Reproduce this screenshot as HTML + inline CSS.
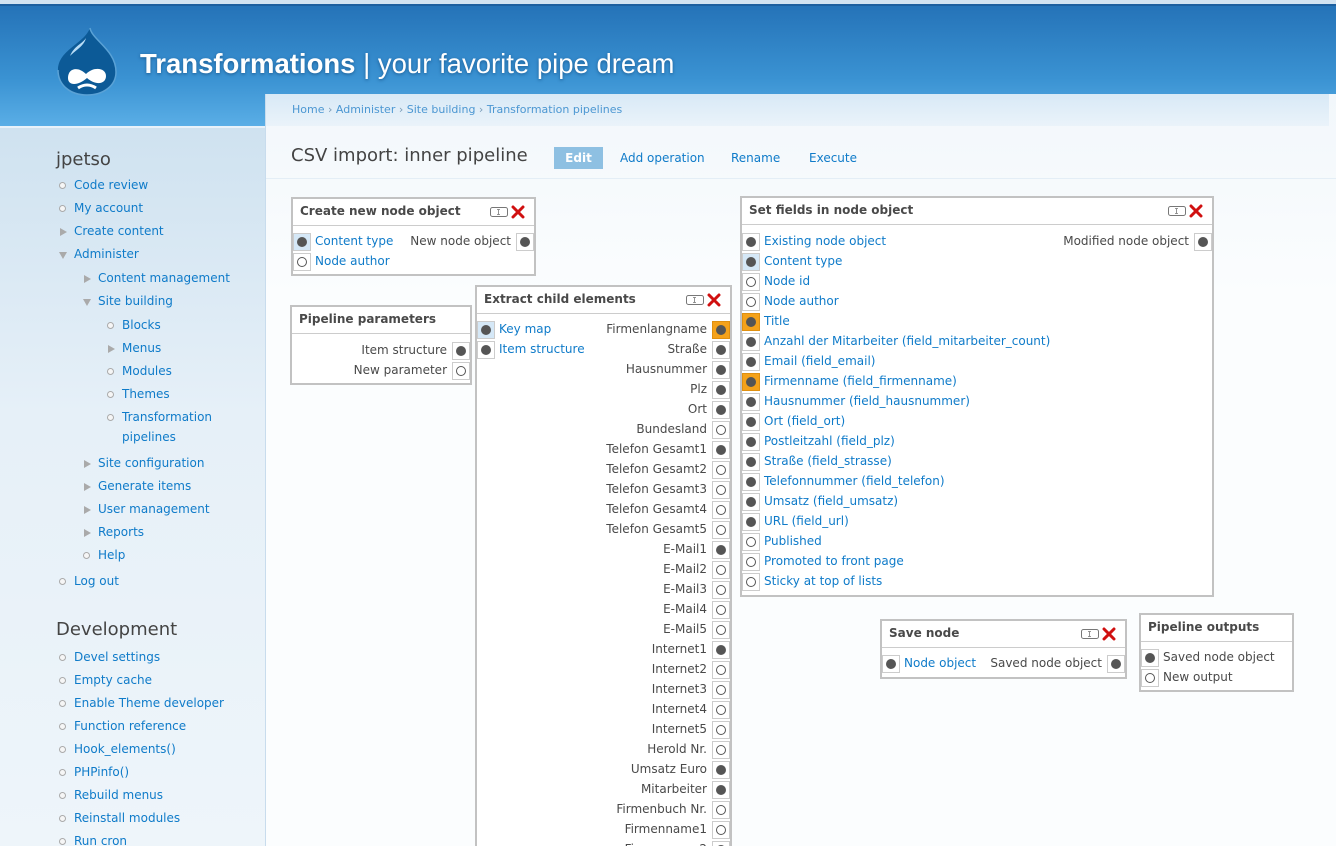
<!DOCTYPE html>
<html style="width:1336px;height:846px;overflow:hidden"><head><meta charset="utf-8">
<style>
*{box-sizing:border-box;margin:0;padding:0}
body{width:1336px;height:846px;overflow:hidden;font-family:"DejaVu Sans","Liberation Sans",sans-serif;font-size:12px;color:#494949;position:relative;background:#edf5fa}
a{color:#0f7bc9;text-decoration:none}
#top{position:absolute;left:0;top:0;width:1336px;height:6px;background:#d2e3f1;border-bottom:2px solid #1d5f9f}
#hdr{position:absolute;left:0;top:6px;width:1336px;height:120px;background:linear-gradient(#2573b8,#3a92d2 60%,#5aaee6)}
#title{position:absolute;left:140px;top:42px;color:#fff;font-family:"Liberation Sans",sans-serif;font-size:27.5px;text-shadow:0 1px 3px #1a5a90;white-space:nowrap}
#title b{font-weight:bold}
#side{position:absolute;left:0;top:126px;width:265px;height:720px;background:linear-gradient(#cfe2f0,#e6f0f8 40%,#eef5fa);border-top:2px solid #e8f2fa}
#main{position:absolute;left:265px;top:94px;width:1071px;height:752px;background:linear-gradient(#f2f7fb,#fbfdfe 200px);border-left:1px solid #c8dced}
#bc{position:absolute;left:0;top:0;width:1063px;height:32px;background:linear-gradient(#d8e9f6,#eaf3fa);font-size:11px;line-height:31px;padding-left:26px;color:#7a9cb8}
#bc a{color:#4c97d2}
.s{position:absolute;white-space:nowrap;line-height:16px}
.sb{position:absolute;width:7px;height:7px;border:1px solid #aaa;border-radius:50%;background:#f6f6f6}
.tri{position:absolute;width:0;height:0}
.tr{border-top:4px solid transparent;border-bottom:4px solid transparent;border-left:7px solid #aaa}
.td{border-left:4px solid transparent;border-right:4px solid transparent;border-top:7px solid #aaa}
.box{position:absolute;border:2px solid #c2c2c2;background:#fff}
.hd{position:absolute;left:0;right:0;top:0;height:27px;border-bottom:1px solid #ccc;font-weight:bold;line-height:25px;padding-left:7px;color:#494949}
.ic{position:absolute;top:6px;right:4px;width:40px;height:14px}
.row{position:absolute;left:0;right:0;height:20px;line-height:18px;white-space:nowrap}
.p{position:absolute;top:1px;width:18px;height:18px;border:1px solid #ccc;background:#fff}
.p.l{left:0}.p.r{right:0}
.p i{position:absolute;left:3px;top:3px;width:10px;height:10px;border-radius:50%;background:#555}
.p.e i{background:#fff;border:1px solid #555}
.p.b{background:#d5e8f7}.p.o{background:#f5a21a;border-color:#e09010}
.lt{position:absolute;left:22px}
.rt{position:absolute;right:23px}
</style></head><body>
<div id="top"></div>
<div id="hdr">
<svg style="position:absolute;left:56px;top:20px" width="62" height="70" viewBox="0 0 62 70">
<path d="M34 2 C36 14 60 24 60 46 C60 60 47 69 31 69 C14 69 2 59 2 44 C2 24 28 18 34 2 Z" fill="#0c5a97"/>
<path d="M34 2 C36 14 60 24 60 46 C60 60 47 69 31 69 C14 69 2 59 2 44" fill="none" stroke="#5aa2d6" stroke-width="1.5"/>
<path d="M14 30 C18 20 26 18 30 12 C28 20 20 24 14 30Z" fill="#b8dcf5"/>
<path d="M12 52 C12 42 22 40 30 48 C38 40 50 42 50 50 C50 58 40 60 31 52 C22 60 12 60 12 52Z" fill="#fff"/>
<path d="M22 62 C28 58 34 58 40 62" stroke="#fff" stroke-width="3" fill="none"/>
</svg>
<div id="title"><b>Transformations</b> | your favorite pipe dream</div>
</div>
<div id="side">
<div class="s" style="left:56px;top:21px;font-size:18px;line-height:22px;color:#444">jpetso</div>
<div class="sb" style="left:59px;top:54px"></div><a class="s" style="left:74px;top:49px">Code review</a>
<div class="sb" style="left:59px;top:77px"></div><a class="s" style="left:74px;top:72px">My account</a>
<div class="tri tr" style="left:60px;top:100px"></div><a class="s" style="left:74px;top:95px">Create content</a>
<div class="tri td" style="left:59px;top:124px"></div><a class="s" style="left:74px;top:118px">Administer</a>
<div class="tri tr" style="left:84px;top:147px"></div><a class="s" style="left:98px;top:142px">Content management</a>
<div class="tri td" style="left:83px;top:171px"></div><a class="s" style="left:98px;top:165px">Site building</a>
<div class="sb" style="left:107px;top:194px"></div><a class="s" style="left:122px;top:189px">Blocks</a>
<div class="tri tr" style="left:108px;top:217px"></div><a class="s" style="left:122px;top:212px">Menus</a>
<div class="sb" style="left:107px;top:240px"></div><a class="s" style="left:122px;top:235px">Modules</a>
<div class="sb" style="left:107px;top:263px"></div><a class="s" style="left:122px;top:258px">Themes</a>
<div class="sb" style="left:107px;top:286px"></div><a class="s" style="left:122px;top:281px">Transformation</a><a class="s" style="left:122px;top:301px">pipelines</a>
<div class="tri tr" style="left:84px;top:332px"></div><a class="s" style="left:98px;top:327px">Site configuration</a>
<div class="tri tr" style="left:84px;top:355px"></div><a class="s" style="left:98px;top:350px">Generate items</a>
<div class="tri tr" style="left:84px;top:378px"></div><a class="s" style="left:98px;top:373px">User management</a>
<div class="tri tr" style="left:84px;top:401px"></div><a class="s" style="left:98px;top:396px">Reports</a>
<div class="sb" style="left:83px;top:424px"></div><a class="s" style="left:98px;top:419px">Help</a>
<div class="sb" style="left:59px;top:450px"></div><a class="s" style="left:74px;top:445px">Log out</a>
<div class="s" style="left:56px;top:491px;font-size:18px;line-height:22px;color:#444">Development</div>
<div class="sb" style="left:59px;top:526px"></div><a class="s" style="left:74px;top:521px">Devel settings</a>
<div class="sb" style="left:59px;top:549px"></div><a class="s" style="left:74px;top:544px">Empty cache</a>
<div class="sb" style="left:59px;top:572px"></div><a class="s" style="left:74px;top:567px">Enable Theme developer</a>
<div class="sb" style="left:59px;top:595px"></div><a class="s" style="left:74px;top:590px">Function reference</a>
<div class="sb" style="left:59px;top:618px"></div><a class="s" style="left:74px;top:613px">Hook_elements()</a>
<div class="sb" style="left:59px;top:641px"></div><a class="s" style="left:74px;top:636px">PHPinfo()</a>
<div class="sb" style="left:59px;top:664px"></div><a class="s" style="left:74px;top:659px">Rebuild menus</a>
<div class="sb" style="left:59px;top:687px"></div><a class="s" style="left:74px;top:682px">Reinstall modules</a>
<div class="sb" style="left:59px;top:710px"></div><a class="s" style="left:74px;top:705px">Run cron</a>
</div>
<div id="main">
<div id="bc"><a>Home</a> › <a>Administer</a> › <a>Site building</a> › <a>Transformation pipelines</a></div>
<div class="s" style="left:25px;top:51px;font-size:18px;line-height:22px;color:#444">CSV import: inner pipeline</div>
<div class="s" style="left:288px;top:53px;width:49px;height:22px;background:#8ec0e2;color:#fff;font-weight:bold;text-align:center;line-height:22px">Edit</div>
<a class="s" style="left:354px;top:56px">Add operation</a>
<a class="s" style="left:465px;top:56px">Rename</a>
<a class="s" style="left:543px;top:56px">Execute</a>
<div style="position:absolute;left:0;top:84px;width:1071px;height:1px;background:#e4eef6"></div>
</div>

<svg width="0" height="0" style="position:absolute"><defs>
<g id="icn"><rect x="0.5" y="2.5" width="17" height="9" rx="2" fill="#fff" stroke="#777"/><path d="M7 4.5h3M8.5 4.5v5M7 9.5h3" stroke="#777" stroke-width="0.8"/>
<path d="M23 2 L33 12 M33 2 L23 12" stroke="#d01010" stroke-width="3" stroke-linecap="round"/></g>
</defs></svg>

<!-- Create new node object -->
<div class="box" style="left:291px;top:197px;width:245px;height:79px">
<div class="hd">Create new node object</div>
<svg class="ic" viewBox="0 0 40 14"><use href="#icn"/></svg>
<div class="row" style="top:33px"><div class="p l b"><i></i></div><a class="lt">Content type</a><span class="rt">New node object</span><div class="p r"><i></i></div></div>
<div class="row" style="top:53px"><div class="p l e"><i></i></div><a class="lt">Node author</a></div>
</div>

<!-- Pipeline parameters -->
<div class="box" style="left:290px;top:305px;width:182px;height:80px">
<div class="hd">Pipeline parameters</div>
<div class="row" style="top:34px"><span class="rt">Item structure</span><div class="p r"><i></i></div></div>
<div class="row" style="top:54px"><span class="rt">New parameter</span><div class="p r e"><i></i></div></div>
</div>

<!-- Extract child elements -->
<div class="box" style="left:475px;top:285px;width:257px;height:600px">
<div class="hd">Extract child elements</div>
<svg class="ic" viewBox="0 0 40 14"><use href="#icn"/></svg>
<div class="row" style="top:33px"><div class="p l b"><i></i></div><a class="lt">Key map</a><span class="rt">Firmenlangname</span><div class="p r o"><i></i></div></div>
<div class="row" style="top:53px"><div class="p l"><i></i></div><a class="lt">Item structure</a><span class="rt">Straße</span><div class="p r"><i></i></div></div>
<div class="row" style="top:73px"><span class="rt">Hausnummer</span><div class="p r"><i></i></div></div>
<div class="row" style="top:93px"><span class="rt">Plz</span><div class="p r"><i></i></div></div>
<div class="row" style="top:113px"><span class="rt">Ort</span><div class="p r"><i></i></div></div>
<div class="row" style="top:133px"><span class="rt">Bundesland</span><div class="p r e"><i></i></div></div>
<div class="row" style="top:153px"><span class="rt">Telefon Gesamt1</span><div class="p r"><i></i></div></div>
<div class="row" style="top:173px"><span class="rt">Telefon Gesamt2</span><div class="p r e"><i></i></div></div>
<div class="row" style="top:193px"><span class="rt">Telefon Gesamt3</span><div class="p r e"><i></i></div></div>
<div class="row" style="top:213px"><span class="rt">Telefon Gesamt4</span><div class="p r e"><i></i></div></div>
<div class="row" style="top:233px"><span class="rt">Telefon Gesamt5</span><div class="p r e"><i></i></div></div>
<div class="row" style="top:253px"><span class="rt">E-Mail1</span><div class="p r"><i></i></div></div>
<div class="row" style="top:273px"><span class="rt">E-Mail2</span><div class="p r e"><i></i></div></div>
<div class="row" style="top:293px"><span class="rt">E-Mail3</span><div class="p r e"><i></i></div></div>
<div class="row" style="top:313px"><span class="rt">E-Mail4</span><div class="p r e"><i></i></div></div>
<div class="row" style="top:333px"><span class="rt">E-Mail5</span><div class="p r e"><i></i></div></div>
<div class="row" style="top:353px"><span class="rt">Internet1</span><div class="p r"><i></i></div></div>
<div class="row" style="top:373px"><span class="rt">Internet2</span><div class="p r e"><i></i></div></div>
<div class="row" style="top:393px"><span class="rt">Internet3</span><div class="p r e"><i></i></div></div>
<div class="row" style="top:413px"><span class="rt">Internet4</span><div class="p r e"><i></i></div></div>
<div class="row" style="top:433px"><span class="rt">Internet5</span><div class="p r e"><i></i></div></div>
<div class="row" style="top:453px"><span class="rt">Herold Nr.</span><div class="p r e"><i></i></div></div>
<div class="row" style="top:473px"><span class="rt">Umsatz Euro</span><div class="p r"><i></i></div></div>
<div class="row" style="top:493px"><span class="rt">Mitarbeiter</span><div class="p r"><i></i></div></div>
<div class="row" style="top:513px"><span class="rt">Firmenbuch Nr.</span><div class="p r e"><i></i></div></div>
<div class="row" style="top:533px"><span class="rt">Firmenname1</span><div class="p r e"><i></i></div></div>
<div class="row" style="top:553px"><span class="rt">Firmenname2</span><div class="p r e"><i></i></div></div>
</div>

<!-- Set fields -->
<div class="box" style="left:740px;top:196px;width:474px;height:401px">
<div class="hd">Set fields in node object</div>
<svg class="ic" viewBox="0 0 40 14"><use href="#icn"/></svg>
<div class="row" style="top:34px"><div class="p l"><i></i></div><a class="lt">Existing node object</a><span class="rt">Modified node object</span><div class="p r"><i></i></div></div>
<div class="row" style="top:54px"><div class="p l b"><i></i></div><a class="lt">Content type</a></div>
<div class="row" style="top:74px"><div class="p l e"><i></i></div><a class="lt">Node id</a></div>
<div class="row" style="top:94px"><div class="p l e"><i></i></div><a class="lt">Node author</a></div>
<div class="row" style="top:114px"><div class="p l o"><i></i></div><a class="lt">Title</a></div>
<div class="row" style="top:134px"><div class="p l"><i></i></div><a class="lt">Anzahl der Mitarbeiter (field_mitarbeiter_count)</a></div>
<div class="row" style="top:154px"><div class="p l"><i></i></div><a class="lt">Email (field_email)</a></div>
<div class="row" style="top:174px"><div class="p l o"><i></i></div><a class="lt">Firmenname (field_firmenname)</a></div>
<div class="row" style="top:194px"><div class="p l"><i></i></div><a class="lt">Hausnummer (field_hausnummer)</a></div>
<div class="row" style="top:214px"><div class="p l"><i></i></div><a class="lt">Ort (field_ort)</a></div>
<div class="row" style="top:234px"><div class="p l"><i></i></div><a class="lt">Postleitzahl (field_plz)</a></div>
<div class="row" style="top:254px"><div class="p l"><i></i></div><a class="lt">Straße (field_strasse)</a></div>
<div class="row" style="top:274px"><div class="p l"><i></i></div><a class="lt">Telefonnummer (field_telefon)</a></div>
<div class="row" style="top:294px"><div class="p l"><i></i></div><a class="lt">Umsatz (field_umsatz)</a></div>
<div class="row" style="top:314px"><div class="p l"><i></i></div><a class="lt">URL (field_url)</a></div>
<div class="row" style="top:334px"><div class="p l e"><i></i></div><a class="lt">Published</a></div>
<div class="row" style="top:354px"><div class="p l e"><i></i></div><a class="lt">Promoted to front page</a></div>
<div class="row" style="top:374px"><div class="p l e"><i></i></div><a class="lt">Sticky at top of lists</a></div>
</div>

<!-- Save node -->
<div class="box" style="left:880px;top:619px;width:247px;height:60px">
<div class="hd">Save node</div>
<svg class="ic" viewBox="0 0 40 14"><use href="#icn"/></svg>
<div class="row" style="top:33px"><div class="p l"><i></i></div><a class="lt">Node object</a><span class="rt">Saved node object</span><div class="p r"><i></i></div></div>
</div>

<!-- Pipeline outputs -->
<div class="box" style="left:1139px;top:613px;width:155px;height:79px">
<div class="hd">Pipeline outputs</div>
<div class="row" style="top:33px"><div class="p l"><i></i></div><span class="lt">Saved node object</span></div>
<div class="row" style="top:53px"><div class="p l e"><i></i></div><span class="lt">New output</span></div>
</div>
</body></html>
